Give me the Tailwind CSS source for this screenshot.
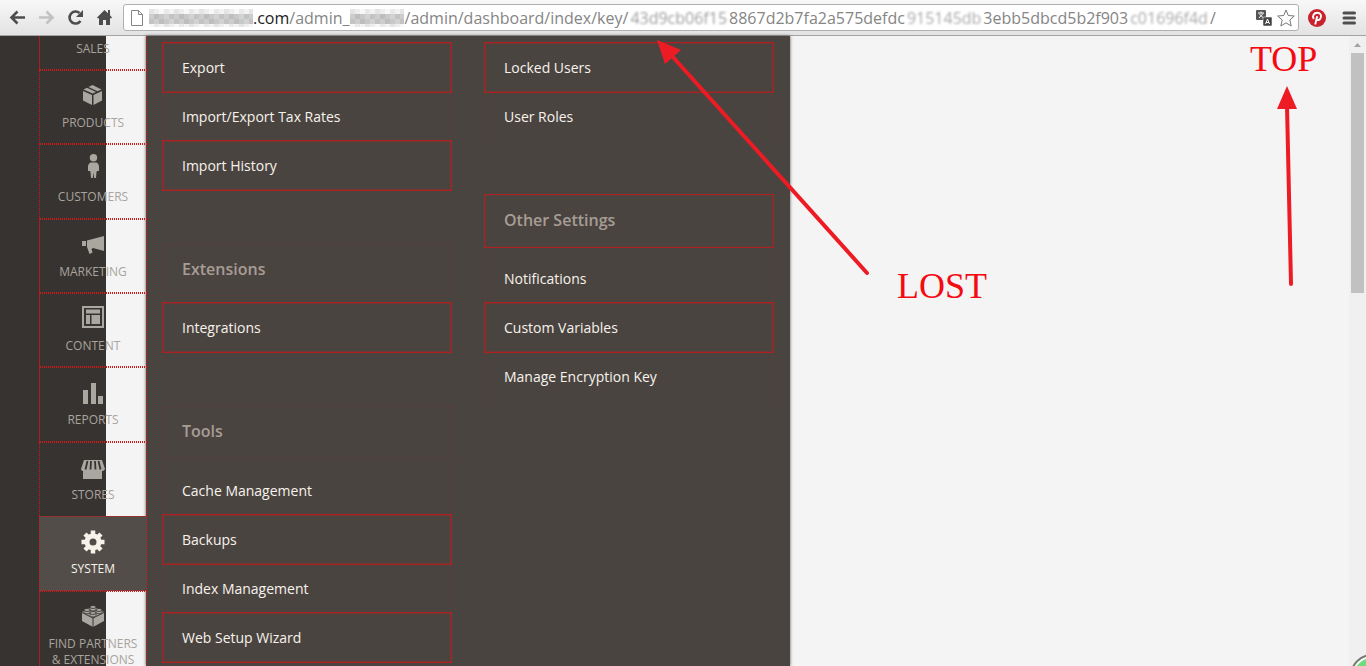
<!DOCTYPE html>
<html lang="en">
<head>
    <meta charset="UTF-8">
    <meta name="viewport" content="width=device-width, initial-scale=1.0">
    <title>Dashboard / Magento Admin</title>

    <!-- Tailwind CSS CDN -->
    <script src="https://cdn.jsdelivr.net/npm/@tailwindcss/browser@4"></script>
</head>
<body class="relative flex h-screen flex-col overflow-hidden bg-[#f4f4f4] font-['Open_Sans',sans-serif]">

    <!-- Browser toolbar -->
    <header class="flex h-9 shrink-0 items-center border-b border-[#a3a3a3] bg-linear-to-b from-[#f8f8f8] to-[#e3e3e3] pr-[9px] pl-2">
        <div class="flex gap-[9px]">
            <button type="button" aria-label="Back" class="size-5">
                <svg viewBox="0 0 20 20" fill="none" stroke="#4d4d4d" stroke-width="2.6"><path d="M17 9.500H4M9.500 3.500L3.500 9.500L9.500 15.500"/></svg>
            </button>
            <button type="button" aria-label="Forward" class="size-5">
                <svg viewBox="0 0 20 20" fill="none" stroke="#c2c2c2" stroke-width="2.600"><path d="M2 9.500H15M9.500 3.500L15.500 9.500L9.500 15.500"/></svg>
            </button>
            <button type="button" aria-label="Reload" class="size-5">
                <svg viewBox="0 0 20 20"><path d="M14.500 13A6 6 0 1 1 13.500 5" fill="none" stroke="#4d4d4d" stroke-width="2.600"/><path d="M17 2V9H10Z" fill="#4d4d4d"/></svg>
            </button>
            <button type="button" aria-label="Home" class="size-5">
                <svg viewBox="0 0 20 20" fill="#4d4d4d"><path d="M9.500 2L2 9.500L3 10.500L4 10V17H8V12H11V17H15V10L16 10.500L17 9.500L15 7.300V2H13V5.300Z"/></svg>
            </button>
        </div>

        <div class="ml-2 flex h-[27px] min-w-0 flex-1 items-center rounded-[3px] border border-[#b0b0b0] bg-white pr-[3px] pl-[7px]">
            <svg class="h-4 w-3 shrink-0" viewBox="0 0 12 16" fill="#fff" stroke="#858585"><path d="M.5.5H7.500L11.500 4.500V15.500H.5ZM7.500.5V4.500H11.500"/></svg>
            <div role="textbox" aria-label="Address" class="ml-[6px] flex min-w-0 flex-1 items-center text-[16px] leading-6 whitespace-nowrap text-[#858585]">
                <svg class="mosaic h-[18px] w-[104px] shrink-0" viewBox="0 0 104 18"></svg>
                <span class="text-[#222]">.com</span><span>/admin_</span>
                <svg class="mosaic h-[18px] w-[54px] shrink-0" viewBox="0 0 54 18"></svg>
                <span class="px-px">/admin/dashboard/index/key/</span>
                <span class="px-px opacity-80 blur-[1px]">43d9cb06f15</span>
                <span class="px-px">8867d2b7fa2a575defdc</span>
                <span class="px-px opacity-70 blur-[1px]">915145db</span>
                <span class="px-px">3ebb5dbcd5b2f903</span>
                <span class="px-px opacity-70 blur-[1px]">c01696f4d</span>
                <span class="px-px">/</span>
            </div>
            <button type="button" aria-label="Translate" class="size-4 shrink-0">
                <svg viewBox="0 0 16 16"><rect width="10" height="10" rx="1" fill="#555"/><path d="M2 3H8M5 1.500V3M3 8L7 3.500M3.300 4L7.500 8" stroke="#fff" fill="none"/><rect x="7" y="7" width="9" height="9" rx="1" fill="#444" stroke="#fff" stroke-width=".5"/><path d="M9.500 14L11.500 9L13.500 14M10 12.500H13" fill="none" stroke="#fff"/></svg>
            </button>
            <button type="button" aria-label="Bookmark" class="ml-[5px] size-[18px] shrink-0">
                <svg viewBox="0 0 18 18" fill="#fff" stroke="#777" stroke-linejoin="round"><path d="M9 1L11.300 6.500L17.300 7L12.800 11L14.200 17L9 13.800L3.800 17L5.200 11L.7 7L6.700 6.500Z"/></svg>
            </button>
        </div>

        <button type="button" aria-label="Pinterest" class="ml-[9px] size-[18px] shrink-0">
            <svg viewBox="0 0 18 18"><circle cx="9" cy="9" r="9" fill="#c8232c"/><path d="M7.200 15.500L9.200 7.300M5.800 10C3.800 7 6 3.800 9.200 3.800C12.200 3.800 13.700 6 12.800 8.500C12 11.300 9.500 11.800 8.300 10.300" fill="none" stroke="#fff" stroke-width="1.900"/></svg>
        </button>
        <button type="button" aria-label="Menu" class="ml-4 h-[14px] w-[15px] shrink-0">
            <svg viewBox="0 0 15 14" stroke="#4f4f4f" stroke-width="3" stroke-linecap="round"><path d="M2 2H12.500M2 7H12.500M2 12H12.500"/></svg>
        </button>
    </header>

    <div class="flex min-h-0 flex-1">
        <!-- Admin sidebar, items run past its right edge -->
        <aside class="w-[106px] shrink-0 bg-[#373330] pl-[39px]">
            <nav class="relative z-10 w-[108px] text-center text-[12px] leading-4 text-[#a9a49e] uppercase">
                <a href="#" class="block h-[34px] border border-t-0 border-dotted border-[#d01818] border-l-[#b01c1c] pt-[5px] [border-left-style:solid]!">Sales</a>
                <a href="#" class="block h-[74px] border border-dotted border-[#d01818] pt-[9px]">
                    <svg class="mx-auto mb-[7px] size-7" viewBox="0 0 28 28" fill="#aaa6a0"><path d="M4 11L13 15V25L4 20.500ZM14.500 15L23 11V20.500L14.500 25ZM4.500 9.500L8 7.700L17 12L13.700 13.600ZM9.500 7L13.500 5L22.500 9.500L18.500 11.300Z"/></svg>
                    Products
                </a>
                <a href="#" class="block h-[75px] border border-dotted border-[#d01818] pt-[9px]">
                    <svg class="mx-auto mb-[7px] size-7" viewBox="0 0 28 28" fill="#aaa6a0"><circle cx="14.500" cy="3.800" r="3.700"/><path d="M11.500 8.500H17.500Q19.500 9 20 12V17H18L17.500 18L17 24H15.200L14.500 18.500L13.800 24H12L11.500 18L11 17H9V12Q9.500 9 11.500 8.500Z"/></svg>
                    Customers
                </a>
                <a href="#" class="block h-[74px] border border-dotted border-[#d01818] border-l-[#b01c1c] pt-[9px] [border-left-style:solid]!">
                    <svg class="mx-auto mb-[7px] size-7" viewBox="0 0 28 28" fill="#aaa6a0"><path d="M3 12H7V17H3ZM8 11.500L25 7V22L14 19L12.500 20L13.500 23.500L10.500 25L8 18Z"/></svg>
                    Marketing
                </a>
                <a href="#" class="block h-[74px] border border-dotted border-[#d01818] border-l-[#b01c1c] pt-[9px] [border-left-style:solid]!">
                    <svg class="mx-auto mb-[7px] size-7" viewBox="0 0 28 28" fill="#aaa6a0"><path fill-rule="evenodd" d="M3 3H25V25H3ZM5 5V23H23V5Z"/><path d="M7 6.500H21V10.500H7ZM7 12H11V21H7ZM12.500 12H21V21H12.500Z"/></svg>
                    Content
                </a>
                <a href="#" class="block h-[75px] border border-dotted border-[#d01818] border-l-[#b01c1c] pt-[9px] [border-left-style:solid]!">
                    <svg class="mx-auto mb-[7px] size-7" viewBox="0 0 28 28" fill="#aaa6a0"><path d="M4 13H9V27H4ZM12 6H17V27H12ZM19 19H24V27H19Z"/></svg>
                    Reports
                </a>
                <a href="#" class="block h-[74px] border border-b-0 border-dotted border-[#d01818] pt-[9px]">
                    <svg class="mx-auto mb-[7px] size-7" viewBox="0 0 28 28"><path fill="#aaa6a0" d="M5 8H23L26 17Q25 19.500 23 19V27H4V19Q2.500 19.500 2 17Z"/><path fill="none" stroke="#373330" stroke-width="1.800" d="M8.500 9L6.500 17.500M12 9L11.500 17.500M16 9L16.500 17.500M19.500 9L21.500 17.500"/></svg>
                    Stores
                </a>
                <a href="#" class="block h-[75px] border border-dotted border-[#d01818] bg-[#524d49] pt-[9px] font-medium text-[#f7f3eb]">
                    <svg class="mx-auto mb-[7px] size-7" viewBox="0 0 28 28"><circle cx="14" cy="16" r="6" fill="none" stroke="#f7f3eb" stroke-width="5"/><path stroke="#f7f3eb" stroke-width="4.500" d="M14 4.500V9M14 23V27.500M2.500 16H7M21 16H25.500M6 8L9 11M19 21L22 24M22 8L19 11M9 21L6 24"/></svg>
                    System
                </a>
                <a href="#" class="block h-[92px] border border-dotted border-[#d01818] border-l-[#b01c1c] pt-[9px] [border-left-style:solid]!">
                    <svg class="mx-auto mb-[7px] size-7" viewBox="0 0 28 28"><path fill="#aaa6a0" d="M3 11L14 5L25 11V20L14 26L3 20Z"/><path fill="none" stroke="#373330" d="M3 11.500L14 17L25 11.500M14 17V26"/><g fill="#aaa6a0" stroke="#373330" stroke-width=".8"><path d="M11 6V8.500A3 1.500 0 0 0 17 8.500V6M5 9V11.300A3 1.500 0 0 0 11 11.300V9M17 9V11.300A3 1.500 0 0 0 23 11.300V9M11 12V14.500A3 1.500 0 0 0 17 14.500V12"/><ellipse cx="14" cy="6" rx="3" ry="1.500"/><ellipse cx="8" cy="9" rx="3" ry="1.500"/><ellipse cx="20" cy="9" rx="3" ry="1.500"/><ellipse cx="14" cy="12" rx="3" ry="1.500"/></g></svg>
                    Find Partners<br>&amp; Extensions
                </a>
            </nav>
        </aside>

        <!-- System submenu -->
        <section class="ml-10 grid w-[644px] shrink-0 grid-cols-2 gap-[34px] bg-[#4a4441] px-[17px] pt-[7px] text-[14px] leading-[49px] text-[#f7f3eb] shadow-[0_0_3px_#555]">
            <div>
                <ul class="mb-[54px]">
                    <li class="outline outline-[#c81919]/80"><a href="#" class="block border border-dotted border-[#c81919]/60 pl-[18px] leading-[47px]">Export</a></li>
                    <li class="border-x border-dotted border-[#c81919]/20"><a href="#" class="block pl-[18px]">Import/Export Tax Rates</a></li>
                    <li class="outline outline-[#c81919]/80"><a href="#" class="block border border-dotted border-[#c81919]/60 pl-[18px] leading-[47px]">Import History</a></li>
                </ul>
                <h2 class="mb-[7px] h-[52px] border border-dotted border-[#c81919]/20 pl-[18px] text-[16px] leading-[49px] font-semibold text-[#a79d95]">Extensions</h2>
                <ul class="mb-[54px]">
                    <li class="outline outline-[#c81919]/80"><a href="#" class="block border border-dotted border-[#c81919]/60 pl-[18px] leading-[47px]">Integrations</a></li>
                </ul>
                <h2 class="mb-2 h-[52px] border border-dotted border-[#c81919]/20 pl-[18px] text-[16px] leading-[49px] font-semibold text-[#a79d95]">Tools</h2>
                <ul>
                    <li class="border-x border-dotted border-[#c81919]/20"><a href="#" class="block pl-[18px]">Cache Management</a></li>
                    <li class="outline outline-[#c81919]/80"><a href="#" class="block border border-dotted border-[#c81919]/60 pl-[18px] leading-[47px]">Backups</a></li>
                    <li class="border-x border-dotted border-[#c81919]/20"><a href="#" class="block pl-[18px]">Index Management</a></li>
                    <li class="outline outline-[#c81919]/80"><a href="#" class="block border border-dotted border-[#c81919]/60 pl-[18px] leading-[47px]">Web Setup Wizard</a></li>
                </ul>
            </div>
            <div>
                <ul class="mb-[54px]">
                    <li class="outline outline-[#c81919]/80"><a href="#" class="block border border-dotted border-[#c81919]/60 pl-[18px] leading-[47px]">Locked Users</a></li>
                    <li class="border-x border-dotted border-[#c81919]/20"><a href="#" class="block pl-[18px]">User Roles</a></li>
                </ul>
                <h2 class="mb-[7px] h-[52px] border border-dotted border-[#c81919]/20 pl-[18px] text-[16px] leading-[49px] font-semibold text-[#a79d95] outline outline-[#c81919]/80">Other Settings</h2>
                <ul>
                    <li class="border-x border-dotted border-[#c81919]/20"><a href="#" class="block pl-[18px]">Notifications</a></li>
                    <li class="outline outline-[#c81919]/80"><a href="#" class="block border border-dotted border-[#c81919]/60 pl-[18px] leading-[47px]">Custom Variables</a></li>
                    <li class="border-x border-dotted border-[#c81919]/20"><a href="#" class="block pl-[18px]">Manage Encryption Key</a></li>
                </ul>
            </div>
        </section>

        <!-- Page scrollbar -->
        <div class="ml-auto flex w-[17px] shrink-0 flex-col items-center bg-[#f0f0f0]">
            <svg class="h-[17px] w-[17px]" viewBox="0 0 17 17" fill="#a3a3a3"><path d="M5 11L8.500 7L12 11Z"/></svg>
            <div class="h-[240px] w-[13px] bg-[#c1c1c1]"></div>
        </div>
    </div>

    <!-- Annotations drawn over the page -->
    <svg class="pointer-events-none absolute top-0 left-0 z-20 h-[300px] w-[1366px]" viewBox="0 0 1366 300" fill="#ed1c24" stroke="#ed1c24" stroke-linecap="round">
        <path stroke-width="4" d="M672 56L867 273M1287 106L1291 284"/>
        <path stroke="none" d="M657 40L681 50L665 64ZM1287 86L1297 109H1277Z"/>
    </svg>
    <p class="absolute top-[264px] left-[897px] z-20 font-['Liberation_Serif',serif] text-[36px] leading-[44px] text-[#f40b12]">LOST</p>
    <p class="absolute top-[37px] left-[1250px] z-20 font-['Liberation_Serif',serif] text-[36px] leading-[44px] text-[#f40b12]">TOP</p>
    <div class="absolute -right-7 -bottom-8 z-20 size-11 rounded-full border-2 border-[#777] bg-[#6fdc7c] ring-2 ring-white ring-inset"></div>

    <script>
        // Fill the censored parts of the address with grey blocks
        document.querySelectorAll('.mosaic').forEach(function (svg) {
            const width = svg.viewBox.baseVal.width;
            let out = '';
            for (let x = 0; x < width; x += 5) {
                for (let y = 0; y < 18; y += 5) {
                    const tone = (y === 5 || y === 10 ? 190 : 228) + (x * 7 + y * 3) % 25;
                    out += '<rect x="' + x + '" y="' + y + '" width="5" height="5" fill="rgb(' + tone + ',' + tone + ',' + tone + ')"/>';
                }
            }
            svg.innerHTML = out;
        });
    </script>
</body>
</html>
